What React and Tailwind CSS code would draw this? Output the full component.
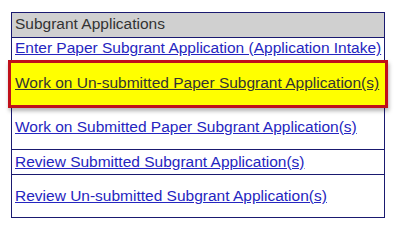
const links = [
  { label: "Work on Submitted Paper Subgrant Application(s)", h: "h-[42px]", pt: "pt-[10px]" },
  { label: "Review Submitted Subgrant Application(s)", h: "h-[25px]", pt: "pt-[3px]" },
  { label: "Review Un-submitted Subgrant Application(s)", h: "h-[42px]", pt: "pt-[12px]" },
];

const App = () => {
  return (
    <div className="w-[400px] h-[233px] bg-white pt-[12px] pl-[11px] font-['Liberation_Sans',Arial,sans-serif] text-[15.5px] leading-[18px]">
      <div className="w-[374px] border border-[#1a1a70]">
        <div className="h-[25px] bg-[#d0d0d0] border-b border-[#1a1a70] pl-[3px] pt-[2px] text-[#333]">
          Subgrant Applications
        </div>
        <div className="h-[22px] pl-[3px] pt-[1px]">
          <a href="#" className="text-[#2525c0] underline">
            Enter Paper Subgrant Application (Application Intake)
          </a>
        </div>
        <div className="relative -mx-[4px] h-[48px] border-[3px] border-[#c0101a] bg-[#ffff00] pl-[4px] pt-[11px] shadow-[1px_3px_4px_rgba(0,0,0,0.3)]">
          <a href="#" className="text-[#333] underline">
            Work on Un-submitted Paper Subgrant Application(s)
          </a>
        </div>
        {links.map((item, key) => (
          <div
            key={key}
            className={`${item.h} ${item.pt} pl-[3px] ${key < links.length - 1 ? "border-b border-[#1a1a70]" : ""}`}
          >
            <a href="#" className="text-[#2525c0] underline">
              {item.label}
            </a>
          </div>
        ))}
      </div>
    </div>
  );
};

export default App;
